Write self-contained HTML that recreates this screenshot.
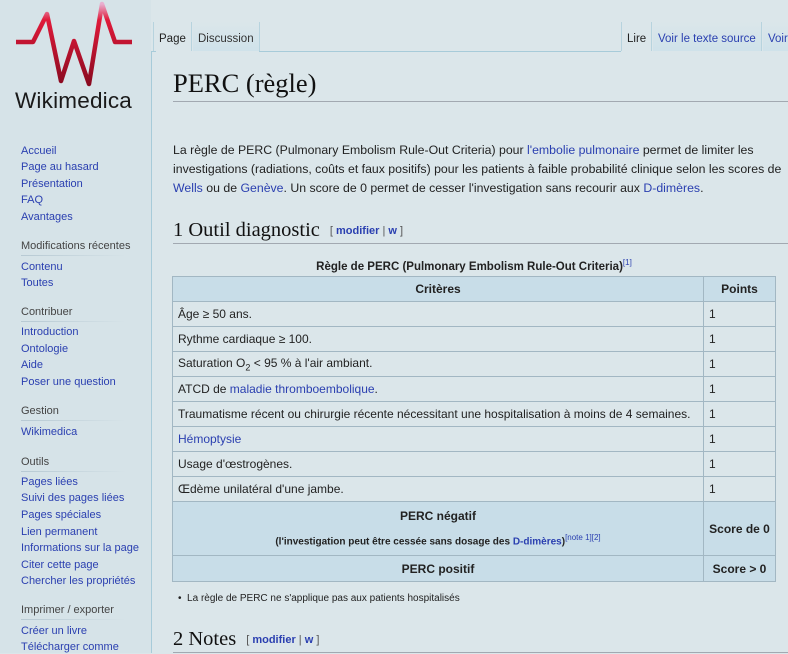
<!DOCTYPE html>
<html><head><meta charset="utf-8"><style>
body{margin:0;width:788px;height:653px;overflow:hidden;background:#dbe6ea;font-family:"Liberation Sans",sans-serif;position:relative}
a{color:#2a3fb0;text-decoration:none}
.side{position:absolute;left:0;top:0;width:151px;height:653px;background:#d6e3e8}
.logo-t{position:absolute;left:15px;top:88px;font-size:22.5px;color:#1a1a1a;letter-spacing:0.2px}
.s{position:absolute;left:21px;font-size:11px;line-height:13px;white-space:nowrap}
.h{color:#444}
.hl{position:absolute;left:21px;width:105px;height:1px;background:linear-gradient(90deg,#b7c9d3,#d6e3e8)}
.vline{position:absolute;left:151px;top:52px;width:1px;height:601px;background:#a7cbd9}
.tab{position:absolute;top:22px;height:29px;font-size:11.5px;line-height:34px;padding:0 5px;background:linear-gradient(#dbe6ea,#cfe2ea);border-right:1px solid #b7d3de}
.tabline{position:absolute;top:51px;height:1px;background:#a7cbd9}
.c{position:absolute;left:173px;width:603px}
h1{position:absolute;left:173px;top:68px;margin:0;font:400 26.5px "Liberation Serif",serif;color:#111;width:615px;border-bottom:1px solid #a2a9b1;padding-bottom:2px}
p{margin:0;font-size:12.3px;line-height:19px;color:#222}
h2{position:absolute;left:173px;margin:0;font:400 20.5px "Liberation Serif",serif;color:#111;width:615px;border-bottom:1px solid #a2a9b1;padding-bottom:1px}
h2 span{font:11px "Liberation Sans",sans-serif;color:#555;margin-left:10px;vertical-align:2px}
h2 span a{font-weight:bold}
table{position:absolute;left:172px;top:276px;border-collapse:collapse;width:604px;font-size:12px;color:#222}
td,th{border:1px solid #a2b7c3;padding:0 5px;height:24px}
th{background:#c8dde8;font-weight:bold}
.cap{position:absolute;left:172px;width:604px;top:258px;text-align:center;font-size:11.5px;font-weight:bold;color:#222}
sup{font-size:8px;font-weight:normal}
</style></head><body>
<div class="side">
<svg style="position:absolute;left:14px;top:0" width="120" height="88" viewBox="0 0 120 88"><defs><linearGradient id="g" x1="0" y1="0" x2="0" y2="1"><stop offset="0" stop-color="#e8b0d0"/><stop offset=".2" stop-color="#e01a3a"/><stop offset="1" stop-color="#8a0a20"/></linearGradient></defs><polyline points="2,42 19,42 33,14 47,81 60,41 75,84 88,4 101,42 118,42" fill="none" stroke="url(#g)" stroke-width="4.5" stroke-linejoin="round"/></svg>
<div class="logo-t">Wikimedica</div>
<a class="s" style="top:145px">Accueil</a>
<a class="s" style="top:161px">Page au hasard</a>
<a class="s" style="top:178px">Présentation</a>
<a class="s" style="top:194px">FAQ</a>
<a class="s" style="top:211px">Avantages</a>
<div class="s h" style="top:240px">Modifications récentes</div><div class="hl" style="top:255px"></div>
<a class="s" style="top:261px">Contenu</a>
<a class="s" style="top:277px">Toutes</a>
<div class="s h" style="top:306px">Contribuer</div><div class="hl" style="top:321px"></div>
<a class="s" style="top:326px">Introduction</a>
<a class="s" style="top:343px">Ontologie</a>
<a class="s" style="top:359px">Aide</a>
<a class="s" style="top:376px">Poser une question</a>
<div class="s h" style="top:405px">Gestion</div><div class="hl" style="top:420px"></div>
<a class="s" style="top:426px">Wikimedica</a>
<div class="s h" style="top:456px">Outils</div><div class="hl" style="top:471px"></div>
<a class="s" style="top:476px">Pages liées</a>
<a class="s" style="top:492px">Suivi des pages liées</a>
<a class="s" style="top:509px">Pages spéciales</a>
<a class="s" style="top:526px">Lien permanent</a>
<a class="s" style="top:542px">Informations sur la page</a>
<a class="s" style="top:559px">Citer cette page</a>
<a class="s" style="top:575px">Chercher les propriétés</a>
<div class="s h" style="top:604px">Imprimer / exporter</div><div class="hl" style="top:619px"></div>
<a class="s" style="top:625px">Créer un livre</a>
<a class="s" style="top:641px">Télécharger comme</a>
</div>
<div class="vline"></div>
<div class="tabline" style="left:151px;width:5px"></div>
<div class="tab" style="left:153px;background:#dbe6ea;color:#222;border-left:1px solid #b7d3de">Page</div>
<div class="tab" style="left:193px;color:#333">Discussion</div>
<div class="tabline" style="left:259px;width:362px"></div>
<div class="tab" style="left:621px;background:#dbe6ea;color:#222;border-left:1px solid #b7d3de">Lire</div>
<div class="tab" style="left:653px;color:#2a3fb0">Voir le texte source</div>
<div class="tab" style="left:763px;color:#2a3fb0;border:none">Voir</div>
<h1>PERC (règle)</h1>
<div class="c" style="top:141px;width:610px"><p>La règle de PERC (Pulmonary Embolism Rule-Out Criteria) pour <a>l'embolie pulmonaire</a> permet de limiter les investigations (radiations, coûts et faux positifs) pour les patients à faible probabilité clinique selon les scores de <a>Wells</a> ou de <a>Genève</a>. Un score de 0 permet de cesser l'investigation sans recourir aux <a>D-dimères</a>.</p></div>
<h2 style="top:219px">1 Outil diagnostic<span>[ <a>modifier</a> | <a>w</a> ]</span></h2>
<div class="cap">Règle de PERC (Pulmonary Embolism Rule-Out Criteria)<sup><a>[1]</a></sup></div>
<table>
<tr><th>Critères</th><th style="width:61px">Points</th></tr>
<tr><td>Âge ≥ 50 ans.</td><td>1</td></tr>
<tr><td>Rythme cardiaque ≥ 100.</td><td>1</td></tr>
<tr><td>Saturation O<sub style="font-size:9px">2</sub> &lt; 95 % à l'air ambiant.</td><td>1</td></tr>
<tr><td>ATCD de <a>maladie thromboembolique</a>.</td><td>1</td></tr>
<tr><td>Traumatisme récent ou chirurgie récente nécessitant une hospitalisation à moins de 4 semaines.</td><td>1</td></tr>
<tr><td><a>Hémoptysie</a></td><td>1</td></tr>
<tr><td>Usage d'œstrogènes.</td><td>1</td></tr>
<tr><td>Œdème unilatéral d'une jambe.</td><td>1</td></tr>
<tr><th style="height:53px;font-size:12px">PERC négatif<div style="font-size:10px;margin-top:10px">(l'investigation peut être cessée sans dosage des <a>D-dimères</a>)<sup><a>[note 1][2]</a></sup></div></th><th>Score de 0</th></tr>
<tr><th style="height:25px">PERC positif</th><th>Score &gt; 0</th></tr>
</table>
<div style="position:absolute;left:178px;top:593px;font-size:10px;color:#222">• &nbsp;La règle de PERC ne s'applique pas aux patients hospitalisés</div>
<h2 style="top:628px">2 Notes<span>[ <a>modifier</a> | <a>w</a> ]</span></h2>
</body></html>
